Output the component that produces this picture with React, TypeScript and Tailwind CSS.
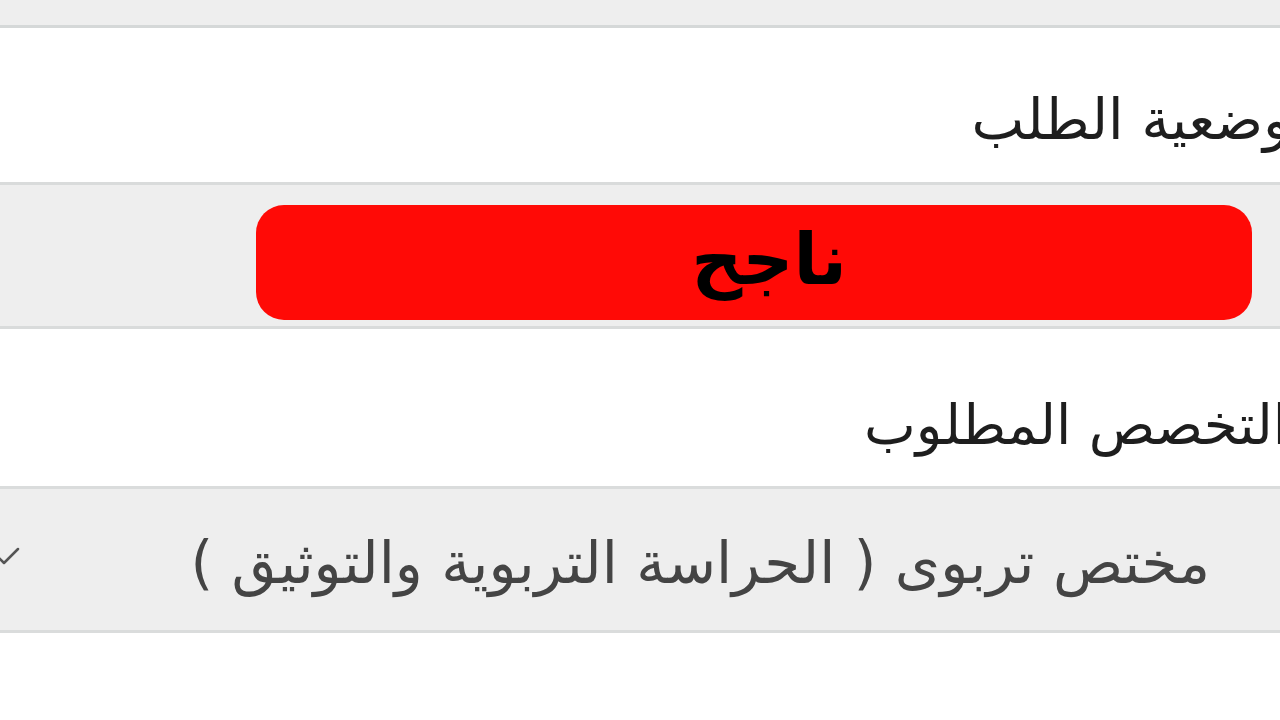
import React from 'react';

export default function App() {
    return (
        <div dir="rtl" className="w-[1280px] h-[720px] overflow-hidden bg-white" style={{ fontFamily: '"DejaVu Sans", "Noto Sans", sans-serif' }}>
            {/* previous field, cut off at the top */}
            <div className="h-[28px] bg-[#eeeeee] border-b-[3px] border-[#d5d8d8]" />

            {/* Label 1 */}
            <div className="h-[154px] flex items-center -mr-[10px] pt-[30px]">
                <span className="text-[56px] text-[#1e1e1e] leading-none whitespace-nowrap">وضعية الطلب</span>
            </div>

            {/* Status field */}
            <div className="h-[147px] bg-[#eeeeee] border-t-[3px] border-b-[3px] border-[#d9dbdb] flex items-center pr-[28px] pt-[14px]">
                <div className="w-[996px] h-[115px] bg-[#ff0a06] rounded-[28px] flex items-center justify-center pl-[30px] pb-[6px]">
                    <span className="text-[71px] font-bold text-black leading-none">ناجح</span>
                </div>
            </div>

            {/* Label 2 */}
            <div className="h-[157px] flex items-center -mr-[8px] pt-[36px]">
                <span className="text-[55px] text-[#1e1e1e] leading-none whitespace-nowrap">التخصص المطلوب</span>
            </div>

            {/* Speciality field */}
            <div className="h-[147px] bg-[#eeeeee] border-t-[3px] border-b-[3px] border-[#dadcdc] flex items-center pr-[70px] pt-[6px] relative">
                <span className="text-[58px] text-[#444444] leading-none whitespace-nowrap">مختص تربوى ( الحراسة التربوية والتوثيق )</span>
                <svg className="absolute left-[-14px] top-[46px]" width="36" height="40" viewBox="0 0 36 40" fill="none">
                    <path d="M4 14 L18 28 L32 14" stroke="#555" strokeWidth="2.5" strokeLinecap="round" strokeLinejoin="round" />
                </svg>
            </div>
        </div>
    );
}
